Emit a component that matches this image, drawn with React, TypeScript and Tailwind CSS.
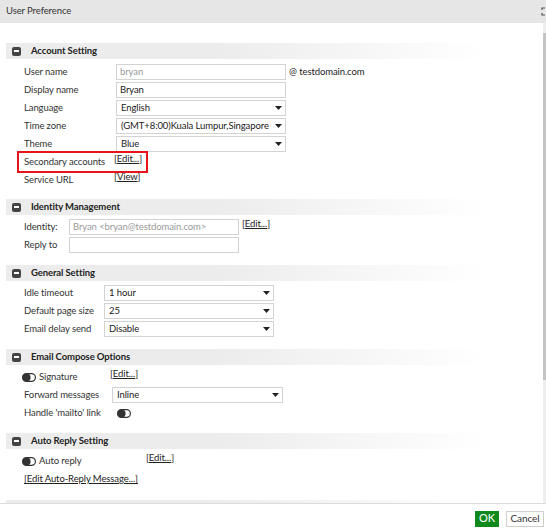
import React from 'react';

// Small building blocks for the preference dialog
const SectionHeader: React.FC<{ title: string }> = ({ title }) => (
  <div className="h-[16px] flex items-center bg-gradient-to-r from-[#ececec] from-40% to-white to-[92%]">
    <span className="ml-[6px] w-[9px] h-[9px] rounded-[2px] bg-[#444] flex items-center justify-center">
      <span className="w-[5px] h-[1.5px] bg-white" />
    </span>
    <span className="ml-[10px] font-bold text-[#222]">{title}</span>
  </div>
);

const Caret = () => (
  <svg width="7" height="4" viewBox="0 0 7 4" className="shrink-0">
    <path d="M0 0h7L3.5 4z" fill="#222" />
  </svg>
);

const TextBox: React.FC<{ value?: string; muted?: boolean; width?: string }> = ({ value = '', muted, width = 'w-[170px]' }) => (
  <div className={`${width} h-[16px] border border-[#d3d3d3] px-[3px] flex items-center whitespace-nowrap ${muted ? 'text-[#9a9a9a]' : 'text-[#222]'}`}>
    {value}
  </div>
);

const SelectBox: React.FC<{ value: string; width?: string }> = ({ value, width = 'w-[170px]' }) => (
  <div className={`${width} h-[16px] border border-[#d3d3d3] pl-[4px] pr-[3px] flex items-center justify-between gap-[2px] text-[#222]`}>
    <span className="whitespace-nowrap overflow-hidden">{value}</span>
    <Caret />
  </div>
);

const Toggle = () => (
  <svg width="14" height="9" viewBox="0 0 14 9" className="shrink-0">
    <rect x="0.6" y="0.6" width="12.8" height="7.8" rx="3.9" fill="white" stroke="#333" strokeWidth="1.2" />
    <circle cx="4.5" cy="4.5" r="4.1" fill="#333" />
  </svg>
);

const EditLink: React.FC<{ text?: string }> = ({ text = 'Edit...' }) => (
  <span className="text-[#222] -translate-y-[3px] inline-block whitespace-nowrap">
    [<span className="underline">{text}</span>]
  </span>
);

const Row: React.FC<{ label?: React.ReactNode; labelWidth: string; children?: React.ReactNode }> = ({ label, labelWidth, children }) => (
  <div className="h-[18px] flex items-center pl-[18px]">
    <span className={`${labelWidth} shrink-0 whitespace-nowrap text-[#333]`}>{label}</span>
    {children}
  </div>
);

export default function App() {
  return (
    <div className="w-[546px] h-[531px] flex flex-col bg-white font-[Lato,sans-serif] text-[9.5px] tracking-[-0.1px] overflow-hidden">
      {/* title bar */}
      <div className="h-[23px] shrink-0 bg-[#e6e6e6] flex items-center justify-between pl-[6px]">
        <span className="text-[#333]">User Preference</span>
        <svg width="5" height="9" viewBox="0 0 5 9">
          <path d="M1 3V1h3M1 6v2h3" fill="none" stroke="#555" strokeWidth="1.2" />
        </svg>
      </div>

      {/* scrolling body */}
      <div className="flex-1 flex min-h-0 border-b border-[#dcdcdc]">
        <div className="flex-1 overflow-hidden pt-[20px] pl-[6px] pr-[16px]">
          <SectionHeader title="Account Setting" />
          <div className="mt-[4px] mb-[10px]">
            <Row label="User name" labelWidth="w-[92px]">
              <TextBox value="bryan" muted />
              <span className="ml-[3px] text-[#222] whitespace-nowrap">@ testdomain.com</span>
            </Row>
            <Row label="Display name" labelWidth="w-[92px]">
              <TextBox value="Bryan" />
            </Row>
            <Row label="Language" labelWidth="w-[92px]">
              <SelectBox value="English" />
            </Row>
            <Row label="Time zone" labelWidth="w-[92px]">
              <SelectBox value="(GMT+8:00)Kuala Lumpur,Singapore" />
            </Row>
            <Row label="Theme" labelWidth="w-[92px]">
              <SelectBox value="Blue" />
            </Row>
            <div className="relative">
              <Row label="Secondary accounts" labelWidth="w-[90px]">
                <EditLink />
              </Row>
              <div className="absolute left-[11px] top-[-2px] w-[131px] h-[22px] border-2 border-[#e8141c]" />
            </div>
            <Row label="Service URL" labelWidth="w-[90px]">
              <EditLink text="View" />
            </Row>
          </div>

          <SectionHeader title="Identity Management" />
          <div className="mt-[3px] mb-[11px]">
            <Row label="Identity:" labelWidth="w-[45px]">
              <TextBox value="Bryan <bryan@testdomain.com>" muted />
              <span className="ml-[3px]">
                <EditLink />
              </span>
            </Row>
            <Row label="Reply to" labelWidth="w-[45px]">
              <TextBox />
            </Row>
          </div>

          <SectionHeader title="General Setting" />
          <div className="mt-[3px] mb-[11px]">
            <Row label="Idle timeout" labelWidth="w-[80px]">
              <SelectBox value="1 hour" />
            </Row>
            <Row label="Default page size" labelWidth="w-[80px]">
              <SelectBox value="25" />
            </Row>
            <Row label="Email delay send" labelWidth="w-[80px]">
              <SelectBox value="Disable" />
            </Row>
          </div>

          <SectionHeader title="Email Compose Options" />
          <div className="mt-[3px] mb-[11px]">
            <div className="h-[18px] flex items-center pl-[16px]">
              <Toggle />
              <span className="ml-[3px] w-[71px] text-[#333]">Signature</span>
              <EditLink />
            </div>
            <Row label="Forward messages" labelWidth="w-[88px]">
              <SelectBox value="Inline" width="w-[171px]" />
            </Row>
            <Row label="Handle 'mailto' link" labelWidth="w-[93px]">
              <Toggle />
            </Row>
          </div>

          <SectionHeader title="Auto Reply Setting" />
          <div className="mt-[3px] mb-[12px]">
            <div className="h-[18px] flex items-center pl-[16px]">
              <Toggle />
              <span className="ml-[3px] w-[107px] text-[#333]">Auto reply</span>
              <EditLink />
            </div>
            <Row labelWidth="w-0">
              <span className="text-[#222] underline whitespace-nowrap">[Edit Auto-Reply Message...]</span>
            </Row>
          </div>

          <SectionHeader title="Advanced Setting" />
        </div>
        {/* scrollbar */}
        <div className="w-[3px] shrink-0 bg-[#eeeeee] pt-[10px]">
          <div className="h-[347px] bg-[#c4c4c4]" />
        </div>
      </div>

      {/* footer buttons */}
      <div className="h-[27px] shrink-0 flex items-center justify-end gap-[7px] pr-[2px] pt-[2px]">
        <button className="h-[16px] w-[24px] bg-[#11891d] text-white text-[11px] flex items-center justify-center">OK</button>
        <button className="h-[16px] w-[38px] border border-[#cfcfcf] bg-white text-[#333] text-[10px] flex items-center justify-center">Cancel</button>
      </div>
    </div>
  );
}
